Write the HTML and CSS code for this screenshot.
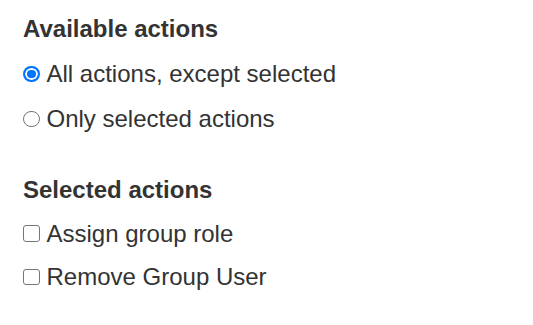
FILE: index.html
```html
<!DOCTYPE html>
<html>
<head>
<meta charset="utf-8">
<link rel="stylesheet" href="styles.css">
</head>
<body>
<div class="panel">
  <section class="group first">
    <h3 class="title">Available actions</h3>
    <label class="option"><input class="radio" type="radio" name="mode" checked>All actions, except selected</label>
    <label class="option"><input class="radio" type="radio" name="mode">Only selected actions</label>
  </section>
  <section class="group second">
    <h3 class="title">Selected actions</h3>
    <label class="option"><input class="check" type="checkbox">Assign group role</label>
    <label class="option"><input class="check" type="checkbox">Remove Group User</label>
  </section>
</div>
</body>
</html>
```
FILE: styles.css
```css
html, body { margin: 0; padding: 0; background: #fff; }
body { font-family: "Liberation Sans", Arial, sans-serif; color: #333; }
.panel { padding: 15px 23px 0 23px; }
.group { display: flex; flex-direction: column; }
.first { gap: 17px; }
.second { gap: 15.5px; margin-top: 43px; }
.title { font-size: 24px; font-weight: bold; margin: 0; line-height: 28px; }
.option { display: flex; align-items: center; font-size: 24px; line-height: 28px; }
.option input {
  -webkit-appearance: none;
  appearance: none;
  box-sizing: border-box;
  margin: 0 7px 0 0;
  width: 16.5px;
  height: 16.5px;
  flex: none;
  border: 1px solid #767676;
  background: #fff;
}
.radio { border-radius: 50%; }
.radio:checked {
  border: 2px solid #0075ff;
  background: #0075ff;
  box-shadow: inset 0 0 0 2px #fff;
}
.check { border-radius: 3px; }
```
